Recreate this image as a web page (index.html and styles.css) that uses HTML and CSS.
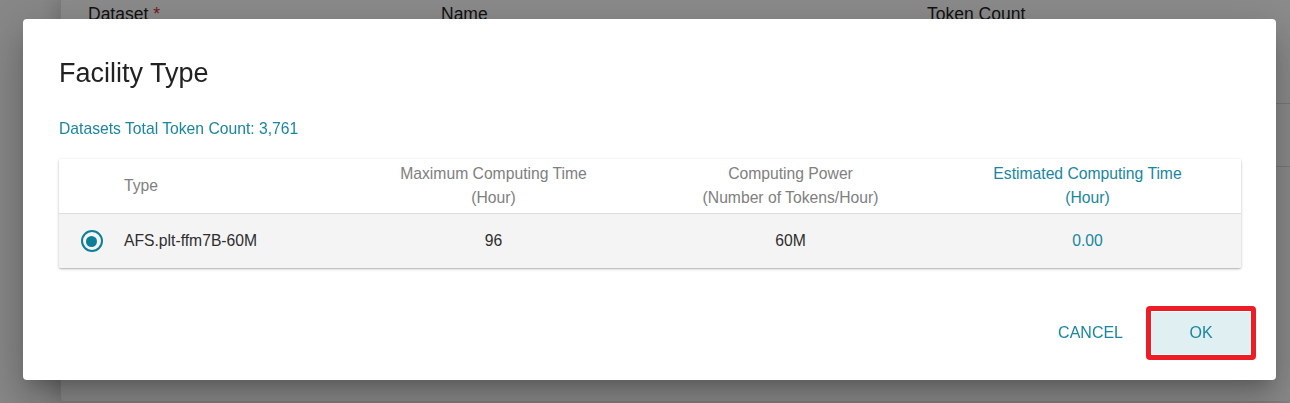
FILE: index.html
```html
<!DOCTYPE html>
<html>
<head>
<meta charset="utf-8">
<link rel="stylesheet" href="styles.css">
</head>
<body>
<div class="page">
  <div class="bg-card">
    <div class="bg-head">
      <span class="bg-c1">Dataset <span class="req">*</span></span>
      <span class="bg-c2">Name</span>
      <span class="bg-c3">Token Count</span>
    </div>
    <div class="bg-row"></div>
  </div>
</div>
<div class="backdrop"></div>
<div class="dialog">
  <h2 class="title">Facility Type</h2>
  <div class="total">Datasets Total Token Count: 3,761</div>
  <div class="table">
    <div class="row head">
      <div class="cell sel"></div>
      <div class="cell type">Type</div>
      <div class="cell num">Maximum Computing Time<br>(Hour)</div>
      <div class="cell num">Computing Power<br>(Number of Tokens/Hour)</div>
      <div class="cell num accent">Estimated Computing Time<br>(Hour)</div>
    </div>
    <div class="row body">
      <div class="cell sel"><span class="radio"><span class="dot"></span></span></div>
      <div class="cell type dark">AFS.plt-ffm7B-60M</div>
      <div class="cell num dark">96</div>
      <div class="cell num dark">60M</div>
      <div class="cell num accent">0.00</div>
    </div>
  </div>
  <div class="actions">
    <button class="btn cancel">CANCEL</button>
    <span class="highlight"><button class="btn ok">OK</button></span>
  </div>
</div>
</body>
</html>
```
FILE: styles.css
```css
html, body {
  margin: 0;
  padding: 0;
  height: 100%;
}
body {
  background: #f7f7f7;
  font-family: "Liberation Sans", Arial, sans-serif;
  overflow: hidden;
}
.page {
  padding-left: 60px;
  height: 403px;
  box-sizing: border-box;
}
.bg-card {
  background: #ffffff;
  height: 401px;
  border-radius: 0 0 4px 4px;
  box-shadow: -6px 0 14px rgba(0,0,0,0.12);
  border-left: 1px solid #e3e3e3;
}
.bg-head {
  display: flex;
  height: 104px;
  box-sizing: border-box;
  padding-top: 4px;
  border-bottom: 1px solid #dcdcdc;
  font-size: 17.5px;
  color: #1f1f1f;
}
.bg-c1 { margin-left: 27px; width: 353px; }
.bg-c2 { width: 486px; }
.req { color: #d32f2f; }
.bg-row {
  height: 62px;
  border-bottom: 1px solid #dcdcdc;
}
.backdrop {
  position: fixed;
  inset: 0;
  background: rgba(0,0,0,0.45);
}
.dialog {
  position: absolute;
  left: 23px;
  top: 19px;
  width: 1253px;
  height: 361px;
  box-sizing: border-box;
  background: #fff;
  border-radius: 4px;
  box-shadow: 0 11px 15px -7px rgba(0,0,0,0.2), 0 24px 38px 3px rgba(0,0,0,0.14), 0 9px 46px 8px rgba(0,0,0,0.12);
  padding: 34px 35px 0 36px;
  display: flex;
  flex-direction: column;
}
.title {
  margin: 0;
  font-size: 27px;
  font-weight: 400;
  line-height: 40px;
  color: #222;
}
.total {
  margin-top: 26px;
  font-size: 15.7px;
  line-height: 20px;
  color: #1a86a0;
}
.table {
  margin-top: 20px;
  box-shadow: 0 1px 3px rgba(0,0,0,0.25), 0 1px 1px rgba(0,0,0,0.1);
  border-radius: 2px;
  overflow: hidden;
}
.row {
  display: flex;
  align-items: center;
}
.row.head {
  height: 54px;
  background: #fff;
  border-bottom: 1px solid #dedede;
}
.row.body {
  height: 54px;
  background: #f4f4f4;
}
.cell {
  font-size: 15.7px;
  line-height: 24px;
  color: #808080;
}
.sel {
  width: 65px;
  display: flex;
  justify-content: center;
}
.type { width: 221px; }
.num { width: 297px; text-align: center; }
.dark { color: #2e2e2e; }
.accent { color: #1a86a0; }
.radio {
  width: 22px;
  height: 22px;
  box-sizing: border-box;
  border: 2.5px solid #0e7f99;
  border-radius: 50%;
  display: flex;
  align-items: center;
  justify-content: center;
}
.dot {
  width: 11px;
  height: 11px;
  border-radius: 50%;
  background: #0e7f99;
}
.actions {
  margin-top: auto;
  margin-bottom: 20px;
  margin-right: -15px;
  display: flex;
  justify-content: flex-end;
  align-items: center;
  gap: 15px;
}
.btn {
  font-family: "Liberation Sans", Arial, sans-serif;
  font-size: 16px;
  border: none;
  background: transparent;
  color: #1a86a0;
  cursor: pointer;
  height: 42px;
  padding: 0 8px;
}
.highlight {
  display: inline-flex;
  border: 5px solid #ee1c25;
  border-radius: 4px;
  padding: 1px;
}
.btn.ok {
  width: 98px;
  background: #e0eff2;
  border-radius: 0;
}
```
